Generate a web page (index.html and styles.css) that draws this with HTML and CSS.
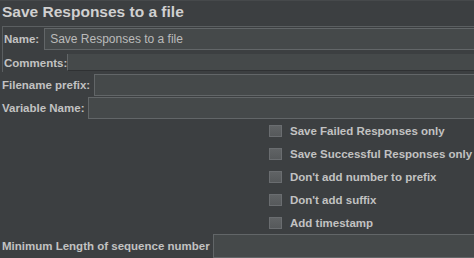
FILE: index.html
```html
<!DOCTYPE html>
<html lang="en">
<head>
    <meta charset="UTF-8">
    <title>Save Responses to a file</title>
    <link rel="stylesheet" href="styles.css">
</head>
<body>
    <div class="panel">
        <h1 class="title">Save Responses to a file</h1>

        <div class="name-box">
            <div class="row">
                <span class="label">Name:</span>
                <div class="field">Save Responses to a file</div>
            </div>
            <div class="row comments-row">
                <span class="label">Comments:</span>
                <div class="field comments"></div>
            </div>
        </div>

        <div class="row prefix-row">
            <span class="label">Filename prefix:</span>
            <div class="field"></div>
        </div>
        <div class="row var-row">
            <span class="label">Variable Name:</span>
            <div class="field"></div>
        </div>

        <div class="options">
            <div class="check"><span class="box"></span>Save Failed Responses only</div>
            <div class="check"><span class="box"></span>Save Successful Responses only</div>
            <div class="check"><span class="box"></span>Don't add number to prefix</div>
            <div class="check"><span class="box"></span>Don't add suffix</div>
            <div class="check"><span class="box"></span>Add timestamp</div>
        </div>

        <div class="row min-row">
            <span class="label">Minimum Length of sequence number</span>
            <div class="field"></div>
        </div>
    </div>
</body>
</html>
```

FILE: styles.css
```css
body {
    margin: 0;
    background: #3c3f41;
    color: #c2c2c2;
    font-family: 'Liberation Sans', Arial, sans-serif;
    overflow: hidden;
}
.panel {
    width: 474px;
    height: 258px;
    border-top: 1px solid #46494b;
    box-sizing: border-box;
}
.title {
    margin: 0 0 4px 2px;
    padding-top: 1px;
    height: 20px;
    line-height: 20px;
    font-size: 15.5px;
    font-weight: bold;
    color: #d0d0d0;
}
.name-box {
    margin-left: 2px;
    border-top: 1px solid #5b5f61;
    border-left: 1px solid #5b5f61;
    padding: 1px 0 1px 1px;
    display: flex;
    flex-direction: column;
    gap: 4px;
}
.row {
    display: flex;
    align-items: center;
    gap: 4px;
    height: 22px;
}
.label {
    font-size: 11.5px;
    font-weight: bold;
    white-space: nowrap;
}
.field {
    flex: 1;
    height: 22px;
    box-sizing: border-box;
    background: #45494a;
    border: 1px solid #626668;
    border-right: none;
    padding-left: 5px;
    font-size: 12px;
    line-height: 20px;
    color: #bbbbbb;
}
.name-box .row:first-child {
    gap: 5px;
}
.comments-row {
    height: 17px;
    gap: 0;
}
.comments {
    height: 17px;
    border-top: none;
    border-bottom: 1px solid #2f3133;
}
.prefix-row {
    margin: 2px 0 0 2px;
}
.var-row {
    margin: 1px 0 0 2px;
}
.options {
    display: flex;
    flex-direction: column;
    padding-left: 269px;
}
.check {
    display: flex;
    align-items: center;
    gap: 8px;
    height: 23px;
    font-size: 11.5px;
    font-weight: bold;
    white-space: nowrap;
}
.box {
    width: 13px;
    height: 12px;
    box-sizing: border-box;
    background: linear-gradient(#606365, #56595b);
    border: 1px solid #6a6d70;
}
.min-row {
    margin-left: 2px;
    height: 24px;
    gap: 3px;
}
.min-row .field {
    height: 24px;
}
```
